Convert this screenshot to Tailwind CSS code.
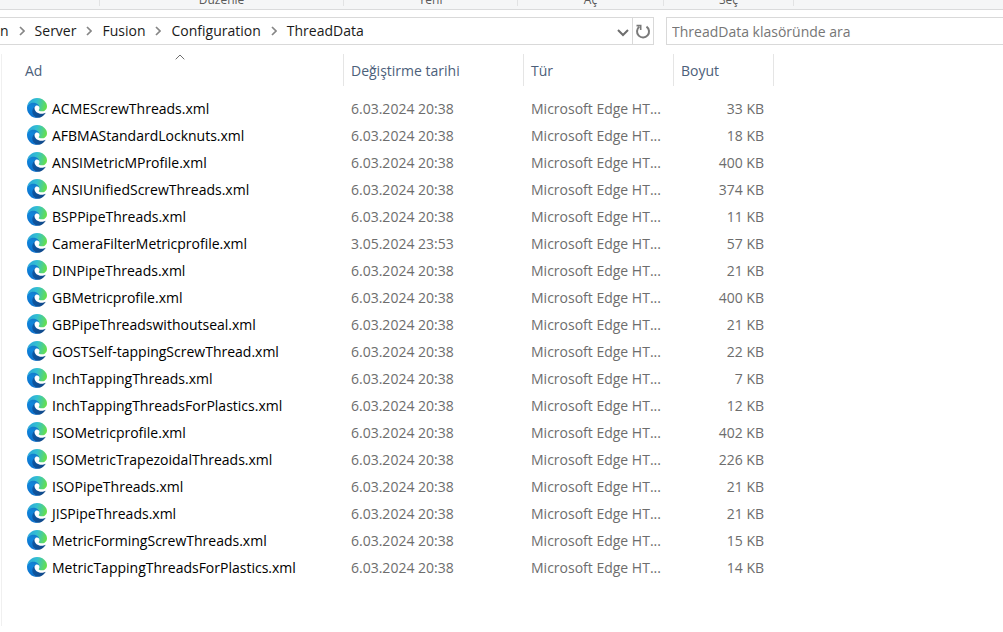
<!DOCTYPE html>

<html lang="tr">
<head>
  <title>ThreadData</title>
  <meta charset="utf-8">
  <meta name="viewport" content="width=device-width, initial-scale=1">

  <script src="https://cdn.jsdelivr.net/npm/@tailwindcss/browser@4"></script>
</head>

<body class="min-h-screen flex flex-col bg-white overflow-hidden font-['Open_Sans','Noto_Sans',sans-serif] text-sm text-black">
  <!-- edge logo, shared by all rows -->
  <svg class="absolute w-0 h-0" aria-hidden="true">
    <defs>
      <linearGradient id="edge-top" x1="0" y1="0.3" x2="1" y2="0.5">
        <stop offset="0" stop-color="#2aa5dc" />
        <stop offset="0.45" stop-color="#33bfd2" />
        <stop offset="0.75" stop-color="#4ed08c" />
        <stop offset="1" stop-color="#66e04c" />
      </linearGradient>
      <linearGradient id="edge-left" x1="0.7" y1="0" x2="0.4" y2="1">
        <stop offset="0" stop-color="#1479c4" />
        <stop offset="0.4" stop-color="#0f86dc" />
        <stop offset="1" stop-color="#0c6ecb" />
      </linearGradient>
      <linearGradient id="edge-bottom" x1="0" y1="0" x2="1" y2="0.4">
        <stop offset="0" stop-color="#0c5aa8" />
        <stop offset="1" stop-color="#114a8b" />
      </linearGradient>
    </defs>
    <symbol id="edge" viewBox="0 0 256 256">
      <path fill="url(#edge-bottom)" d="M231.1 190.5c-3.4 1.8-6.9 3.4-10.5 4.7-11.5 4.3-23.6 6.5-35.9 6.5-47.3 0-88.5-32.5-88.5-74.300.1-11.400 6.400-21.900 16.400-27.300-42.800 1.800-53.800 46.400-53.800 72.500 0 73.900 68.100 81.400 82.800 81.400 7.900 0 19.800-2.300 27-4.600l1.300-.4c27.600-9.500 51-28.100 66.600-52.800 1.200-1.900.6-4.300-1.200-5.500-1.300-.8-2.900-.9-4.200-.2z" />
      <path fill="url(#edge-left)" d="M105.7 241.4c-8.900-5.500-16.600-12.800-22.700-21.300-26.300-36-18.400-86.500 17.600-112.800 3.800-2.700 7.700-5.200 11.900-7.200 3.100-1.500 8.400-4.100 15.500-4 10.100.1 19.600 4.900 25.700 13 4 5.400 6.300 11.900 6.400 18.700 0-.2 24.500-79.600-80-79.600-43.900 0-80 41.700-80 78.200-.2 19.300 4 38.500 12.100 56 27.600 58.800 94.800 87.600 156.400 67.100-21.100 6.600-44.100 3.700-62.900-8.100z" />
      <path fill="url(#edge-top)" d="M152.300 148.900c-.9 1-3.400 2.500-3.400 5.600 0 2.600 1.700 5.200 4.800 7.300 14.300 10 41.400 8.600 41.500 8.600 10.700 0 21.100-2.900 30.300-8.300 18.800-11 30.400-31.100 30.400-52.900.3-22.400-8-37.300-11.300-43.900C223.500 23.900 177.700 0 128 0 58 0 1 56.200 0 126.200c.5-36.500 36.800-66 80-66 3.500 0 23.500.3 42 10 16.300 8.600 24.900 18.900 30.800 29.200 6.200 10.700 7.300 24.100 7.300 29.500 0 5.300-2.700 13.300-7.800 20z" />
    </symbol>
    <symbol id="chevron" viewBox="0 0 6 10">
      <path d="M1 1l4 4-4 4" fill="none" stroke="#868686" stroke-width="1.7" />
    </symbol>
  </svg>

  <header class="h-[10px] flex shrink-0 overflow-hidden bg-[#f5f6f7] border-b border-[#dadbdc] text-xs leading-3 text-[#5a5a5a]">
    <div class="w-[100px] h-[6px] border-r border-[#e2e3e4]"></div>
    <div class="w-[244px] h-[6px] flex items-end justify-center border-r border-[#e2e3e4]">Düzenle</div>
    <div class="w-[174px] h-[6px] flex items-end justify-center border-r border-[#e2e3e4]">Yeni</div>
    <div class="w-[146px] h-[6px] flex items-end justify-center border-r border-[#e2e3e4]">Aç</div>
    <div class="w-[130px] h-[6px] flex items-end justify-center border-r border-[#e2e3e4]">Seç</div>
  </header>

  <div class="flex gap-3 mt-[7px] h-7 shrink-0">
    <div class="w-[654px] flex border border-l-0 border-[#d9d9d9]">
      <nav class="flex-1 flex items-center gap-[10px] text-[#1a1a1a]">
        <a href="#">n</a>
        <svg class="w-[6px] h-[10px]"><use href="#chevron" /></svg>
        <a href="#">Server</a>
        <svg class="w-[6px] h-[10px]"><use href="#chevron" /></svg>
        <a href="#">Fusion</a>
        <svg class="w-[6px] h-[10px]"><use href="#chevron" /></svg>
        <a href="#">Configuration</a>
        <svg class="w-[6px] h-[10px]"><use href="#chevron" /></svg>
        <a href="#">ThreadData</a>
      </nav>
      <button class="w-[18px] flex items-center justify-center" aria-label="Önceki Konumlar">
        <svg class="w-3 h-2 mt-1" viewBox="0 0 12 8"><path d="M1 1l5 5 5-5" fill="none" stroke="#6e6e6e" stroke-width="2" /></svg>
      </button>
      <button class="w-[21px] flex items-center justify-center border-l border-[#d9d9d9]" aria-label="Yenile">
        <svg class="w-4 h-4 mt-[2px]" viewBox="0 0 16 16" fill="none" stroke="#7a7a7a" stroke-width="2">
          <path d="M11.500 2.600a6 6 0 1 1-7.200 0.200" />
          <path d="M1.500 1.600h4.200v4.400" stroke-width="1.600" />
        </svg>
      </button>
    </div>
    <input type="search" aria-label="Ara" placeholder="ThreadData klasöründe ara" class="flex-1 min-w-0 border border-r-0 border-[#d9d9d9] px-[5px] pt-[2px] placeholder:text-[#767676] outline-none">
  </div>

  <main class="flex-1 mt-[9px] mb-[6px] ml-px border-l border-[#f0f0f0]">
    <table class="table-fixed w-[772px] border-separate border-spacing-0 whitespace-nowrap">
      <colgroup>
        <col class="w-[342px]">
        <col class="w-[180px]">
        <col class="w-[150px]">
        <col class="w-[100px]">
      </colgroup>
      <thead class="text-left text-[#4c607a]">
        <tr class="h-8">
          <th class="relative pt-[2px] pl-[23px] font-normal border-r border-[#e5e5e5]">
            Ad
            <svg class="absolute top-0 left-[173px] w-[10px] h-[6px]" viewBox="0 0 10 6"><path d="M.7 5.3L5 1l4.3 4.3" fill="none" stroke="#6e6e6e" /></svg>
          </th>
          <th class="pt-[2px] pl-[7px] font-normal border-r border-[#e5e5e5]">Değiştirme tarihi</th>
          <th class="pt-[2px] pl-[7px] font-normal border-r border-[#e5e5e5]">Tür</th>
          <th class="pt-[2px] pl-[7px] font-normal border-r border-[#e5e5e5]">Boyut</th>
        </tr>
      </thead>
      <tbody id="files" class="text-[#6d6d6d] before:block before:h-[9px] before:content-['']"></tbody>
    </table>
  </main>

  <script>
    const files = [
      ["ACMEScrewThreads.xml", "6.03.2024 20:38", "33 KB"],
      ["AFBMAStandardLocknuts.xml", "6.03.2024 20:38", "18 KB"],
      ["ANSIMetricMProfile.xml", "6.03.2024 20:38", "400 KB"],
      ["ANSIUnifiedScrewThreads.xml", "6.03.2024 20:38", "374 KB"],
      ["BSPPipeThreads.xml", "6.03.2024 20:38", "11 KB"],
      ["CameraFilterMetricprofile.xml", "3.05.2024 23:53", "57 KB"],
      ["DINPipeThreads.xml", "6.03.2024 20:38", "21 KB"],
      ["GBMetricprofile.xml", "6.03.2024 20:38", "400 KB"],
      ["GBPipeThreadswithoutseal.xml", "6.03.2024 20:38", "21 KB"],
      ["GOSTSelf-tappingScrewThread.xml", "6.03.2024 20:38", "22 KB"],
      ["InchTappingThreads.xml", "6.03.2024 20:38", "7 KB"],
      ["InchTappingThreadsForPlastics.xml", "6.03.2024 20:38", "12 KB"],
      ["ISOMetricprofile.xml", "6.03.2024 20:38", "402 KB"],
      ["ISOMetricTrapezoidalThreads.xml", "6.03.2024 20:38", "226 KB"],
      ["ISOPipeThreads.xml", "6.03.2024 20:38", "21 KB"],
      ["JISPipeThreads.xml", "6.03.2024 20:38", "21 KB"],
      ["MetricFormingScrewThreads.xml", "6.03.2024 20:38", "15 KB"],
      ["MetricTappingThreadsForPlastics.xml", "6.03.2024 20:38", "14 KB"]
    ];

    document.querySelector("#files").innerHTML = files.map(([name, date, size]) => `
      <tr class="h-[27px]">
        <td class="pl-[25px] text-black">
          <div class="flex items-center gap-[5px]">
            <svg class="w-5 h-5 shrink-0 mb-[2px]"><use href="#edge" /></svg>
            ${name}
          </div>
        </td>
        <td class="pl-[7px]">${date}</td>
        <td class="pl-[7px]">Microsoft Edge HT...</td>
        <td class="pr-[10px] text-right">${size}</td>
      </tr>`).join("");
  </script>
</body>
</html>
